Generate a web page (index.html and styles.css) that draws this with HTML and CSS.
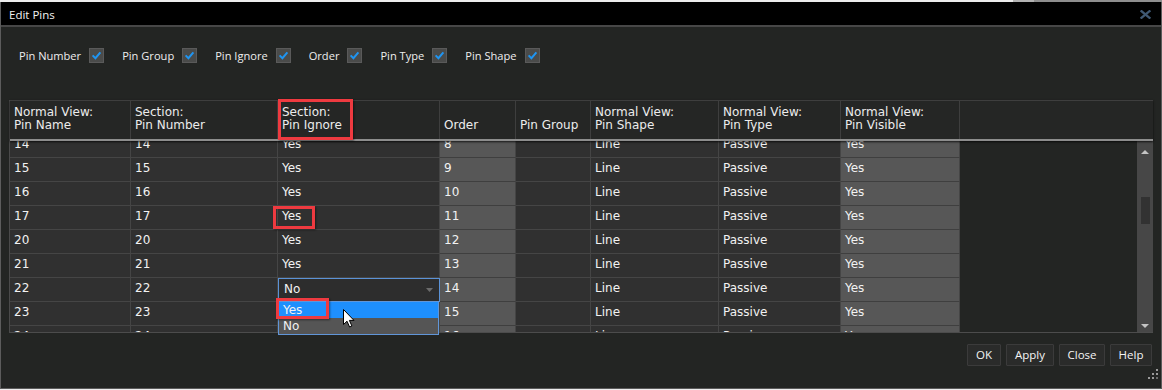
FILE: index.html
```html
<!DOCTYPE html>
<html>
<head>
<meta charset="utf-8">
<title>Edit Pins</title>
<link rel="stylesheet" href="styles.css">
</head>
<body>
<div class="page">
  <div class="topstrip"></div>
  <div class="dialog">
    <div class="titlebar">
      <span class="title">Edit Pins</span>
      <svg class="close" width="11" height="9" viewBox="0 0 11 9"><path d="M1.5 1.2 L9.5 7.8 M9.5 1.2 L1.5 7.8" stroke="#3f5873" stroke-width="2.3" stroke-linecap="square"/></svg>
    </div>

    <div class="options">
      <div class="opt"><span class="opt-label">Pin Number</span><span class="cb"><svg width="13" height="13" viewBox="0 0 13 13"><path d="M2.6 6.4 L5.4 9.2 L10.4 3.4" fill="none" stroke="#1f95f2" stroke-width="2"/></svg></span></div>
      <div class="opt"><span class="opt-label">Pin Group</span><span class="cb"><svg width="13" height="13" viewBox="0 0 13 13"><path d="M2.6 6.4 L5.4 9.2 L10.4 3.4" fill="none" stroke="#1f95f2" stroke-width="2"/></svg></span></div>
      <div class="opt"><span class="opt-label">Pin Ignore</span><span class="cb"><svg width="13" height="13" viewBox="0 0 13 13"><path d="M2.6 6.4 L5.4 9.2 L10.4 3.4" fill="none" stroke="#1f95f2" stroke-width="2"/></svg></span></div>
      <div class="opt"><span class="opt-label">Order</span><span class="cb"><svg width="13" height="13" viewBox="0 0 13 13"><path d="M2.6 6.4 L5.4 9.2 L10.4 3.4" fill="none" stroke="#1f95f2" stroke-width="2"/></svg></span></div>
      <div class="opt"><span class="opt-label">Pin Type</span><span class="cb"><svg width="13" height="13" viewBox="0 0 13 13"><path d="M2.6 6.4 L5.4 9.2 L10.4 3.4" fill="none" stroke="#1f95f2" stroke-width="2"/></svg></span></div>
      <div class="opt"><span class="opt-label">Pin Shape</span><span class="cb"><svg width="13" height="13" viewBox="0 0 13 13"><path d="M2.6 6.4 L5.4 9.2 L10.4 3.4" fill="none" stroke="#1f95f2" stroke-width="2"/></svg></span></div>
    </div>

    <div class="grid">
      <div class="head">
        <div class="hc w1"><span>Normal View:</span><span>Pin Name</span></div>
        <div class="hc w2"><span>Section:</span><span>Pin Number</span></div>
        <div class="hc w3"><span>Section:</span><span>Pin Ignore</span></div>
        <div class="hc w4"><span>Order</span></div>
        <div class="hc w5"><span>Pin Group</span></div>
        <div class="hc w6"><span>Normal View:</span><span>Pin Shape</span></div>
        <div class="hc w7"><span>Normal View:</span><span>Pin Type</span></div>
        <div class="hc w8"><span>Normal View:</span><span>Pin Visible</span></div>
        <div class="hfill"></div>
      </div>
      <div class="bodyarea">
        <div class="viewport">
          <div class="rows">
            <div class="row"><div class="c w1">14</div><div class="c w2">14</div><div class="c w3">Yes</div><div class="c w4 lt">8</div><div class="c w5"></div><div class="c w6">Line</div><div class="c w7">Passive</div><div class="c w8 lt">Yes</div></div>
            <div class="row"><div class="c w1">15</div><div class="c w2">15</div><div class="c w3">Yes</div><div class="c w4 lt">9</div><div class="c w5"></div><div class="c w6">Line</div><div class="c w7">Passive</div><div class="c w8 lt">Yes</div></div>
            <div class="row"><div class="c w1">16</div><div class="c w2">16</div><div class="c w3">Yes</div><div class="c w4 lt">10</div><div class="c w5"></div><div class="c w6">Line</div><div class="c w7">Passive</div><div class="c w8 lt">Yes</div></div>
            <div class="row"><div class="c w1">17</div><div class="c w2">17</div><div class="c w3">Yes</div><div class="c w4 lt">11</div><div class="c w5"></div><div class="c w6">Line</div><div class="c w7">Passive</div><div class="c w8 lt">Yes</div></div>
            <div class="row"><div class="c w1">20</div><div class="c w2">20</div><div class="c w3">Yes</div><div class="c w4 lt">12</div><div class="c w5"></div><div class="c w6">Line</div><div class="c w7">Passive</div><div class="c w8 lt">Yes</div></div>
            <div class="row"><div class="c w1">21</div><div class="c w2">21</div><div class="c w3">Yes</div><div class="c w4 lt">13</div><div class="c w5"></div><div class="c w6">Line</div><div class="c w7">Passive</div><div class="c w8 lt">Yes</div></div>
            <div class="row"><div class="c w1">22</div><div class="c w2">22</div><div class="c w3 editor"><span>No</span><svg width="7" height="4" viewBox="0 0 7 4"><path d="M0 0 L7 0 L3.5 4 Z" fill="#6b6b6b"/></svg></div><div class="c w4 lt">14</div><div class="c w5"></div><div class="c w6">Line</div><div class="c w7">Passive</div><div class="c w8 lt">Yes</div></div>
            <div class="row"><div class="c w1">23</div><div class="c w2">23</div><div class="c w3">Yes</div><div class="c w4 lt">15</div><div class="c w5"></div><div class="c w6">Line</div><div class="c w7">Passive</div><div class="c w8 lt">Yes</div></div>
            <div class="row"><div class="c w1">24</div><div class="c w2">24</div><div class="c w3">Yes</div><div class="c w4 lt">16</div><div class="c w5"></div><div class="c w6">Line</div><div class="c w7">Passive</div><div class="c w8 lt">Yes</div></div>
          </div>
        </div>
        <div class="empty"></div>
        <div class="scrollbar">
          <svg class="sb-up" width="8" height="4" viewBox="0 0 8 4"><path d="M0 4 L4 0 L8 4 Z" fill="#c4c4c4"/></svg>
          <div class="thumb"></div>
          <svg class="sb-down" width="8" height="4" viewBox="0 0 8 4"><path d="M0 0 L8 0 L4 4 Z" fill="#c4c4c4"/></svg>
        </div>
      </div>
      <div class="dropdown">
        <div class="dd-item sel">Yes</div>
        <div class="dd-item">No</div>
      </div>
    </div>

    <div class="footer">
      <button class="btn b-ok">OK</button>
      <button class="btn b-apply">Apply</button>
      <button class="btn b-close">Close</button>
      <button class="btn b-help">Help</button>
    </div>
  </div>

  <div class="anno a1"></div>
  <div class="anno a2"></div>
  <div class="anno a3"></div>

  <svg class="cursor" width="13" height="19" viewBox="0 0 13 19"><path d="M0.5 0.5 L0.5 15.5 L4 12.2 L6.6 18 L8.9 17 L6.4 11.4 L11 11.4 Z" fill="#ffffff" stroke="#000000" stroke-width="1" stroke-linejoin="miter"/></svg>

  <svg class="grip" width="11" height="11" viewBox="0 0 11 11">
    <rect x="8" y="0" width="2" height="2" fill="#9a9a9a"/>
    <rect x="4" y="4" width="2" height="2" fill="#9a9a9a"/>
    <rect x="8" y="4" width="2" height="2" fill="#9a9a9a"/>
    <rect x="0" y="8" width="2" height="2" fill="#9a9a9a"/>
    <rect x="4" y="8" width="2" height="2" fill="#9a9a9a"/>
    <rect x="8" y="8" width="2" height="2" fill="#6a6a6a"/>
  </svg>
</div>
</body>
</html>
```

FILE: styles.css
```css
* { box-sizing: border-box; }
html, body { margin: 0; padding: 0; }
body {
  width: 1162px;
  height: 390px;
  overflow: hidden;
  background: #eeeeee;
  font-family: "Open Sans", "Noto Sans", sans-serif;
}
.page { position: relative; width: 1162px; height: 390px; }

.topstrip {
  height: 2px;
  background: linear-gradient(to right, #ececec 0, #ececec 1013px, #b2b2b2 1013px, #b2b2b2 1034px, #8e8e8e 1034px);
}

.dialog {
  position: relative;
  height: 387px;
  background: #232523;
  border: 1px solid #5c5c5c;
  border-top: 0;
}

.titlebar {
  height: 25px;
  background: #000000;
  border-bottom: 2px solid #474747;
  display: flex;
  align-items: center;
  justify-content: space-between;
  padding: 2px 10px 0 8px;
}
.title { color: #f2f2f2; font-size: 11.5px; }
.close { display: block; }

.options {
  height: 73px;
  display: flex;
  align-items: flex-start;
  padding: 21px 0 0 18px;
}
.opt { display: flex; align-items: center; gap: 8px; margin-right: 18px; height: 15px; }
.opt-label { color: #eeeeee; font-size: 11.1px; line-height: 15px; }
.cb {
  width: 15px; height: 15px;
  background: #4a4b4a;
  border: 1px solid #5a5a5a;
  display: flex; align-items: center; justify-content: center;
}
.cb svg { display: block; }

.grid {
  position: relative;
  margin-left: 8px;
  width: 1144px;
  border-left: 1px solid #4a4a4a;
  font-family: "DejaVu Sans", "Liberation Sans", sans-serif;
  font-size: 12px;
}

.head {
  position: relative;
  z-index: 1;
  display: flex;
  height: 41px;
  background: #252625;
  border-top: 1px solid #3e3e3e;
  border-bottom: 2px solid #8d8d8d;
  box-shadow: 0 1px 2px rgba(0, 0, 0, 0.75);
}
.hc {
  display: flex;
  flex-direction: column;
  justify-content: flex-end;
  padding: 0 0 7px 4px;
  line-height: 13px;
  color: #ececec;
  border-right: 1px solid #3e3e3e;
  white-space: nowrap;
}
.hfill { flex: 1; }

.w1 { width: 121px; }
.w2 { width: 147px; }
.w3 { width: 162px; }
.w4 { width: 76px; }
.w5 { width: 75px; }
.w6 { width: 128px; }
.w7 { width: 122px; }
.w8 { width: 119px; }

.bodyarea {
  display: flex;
  height: 192px;
  border-bottom: 1px solid #4c4c4c;
}
.viewport { width: 950px; height: 191px; overflow: hidden; }
.rows { margin-top: -7px; }
.row { display: flex; height: 24px; }
.c {
  height: 24px;
  padding: 0 0 2px 4px;
  line-height: 21px;
  color: #f2f2f2;
  background: #303030;
  border-right: 1px solid #454545;
  border-bottom: 1px solid #454545;
  white-space: nowrap;
  overflow: hidden;
}
.c.lt { background: #575757; border-bottom-color: #3f3f3f; }
.c.editor {
  display: flex;
  align-items: center;
  justify-content: space-between;
  padding: 0 6px 0 6px;
  background: #2d2d2d;
  outline: 1px solid #5b92d6;
  outline-offset: -1px;
}
.c.editor svg { display: block; }

.empty { flex: 1; background: #232523; }

.scrollbar {
  width: 16px;
  height: 191px;
  background: #474747;
  display: flex;
  flex-direction: column;
  align-items: center;
  padding: 9px 0 4px 0;
}
.scrollbar svg { display: block; }
.thumb { width: 9px; height: 27px; margin-top: 43px; background: #323232; }
.sb-down { margin-top: auto; }

.dropdown {
  position: absolute;
  left: 268px;
  top: 201px;
  width: 161px;
  height: 34px;
  background: #555555;
  border: 1px solid #6196d8;
  z-index: 2;
}
.dd-item {
  height: 16px;
  line-height: 16px;
  padding-left: 4px;
  color: #f2f2f2;
}
.dd-item.sel { background: #1e8ffd; }

.footer {
  display: flex;
  justify-content: flex-end;
  gap: 5px;
  padding: 11px 9px 0 0;
}
.btn {
  height: 22px;
  padding: 0;
  margin: 0;
  background: #2a2b2a;
  border: 1px solid #3b3b3b;
  border-radius: 1px;
  color: #f4f4f4;
  font-family: "Open Sans", "Noto Sans", sans-serif;
  font-size: 11.5px;
  line-height: 18px;
}
.b-ok { width: 34px; }
.b-apply { width: 48px; }
.b-close { width: 46px; }
.b-help { width: 42px; }

.anno {
  position: absolute;
  border: 3px solid #ee3a40;
  box-shadow: 1px 1px 2px rgba(0, 0, 0, 0.45);
  z-index: 5;
}
.a1 { left: 278px; top: 99px; width: 75px; height: 41px; }
.a2 { left: 273px; top: 206px; width: 42px; height: 23px; }
.a3 { left: 276px; top: 298px; width: 53px; height: 21px; }

.cursor { position: absolute; left: 343px; top: 309px; z-index: 6; }
.grip { position: absolute; left: 1148px; top: 369px; }
```
